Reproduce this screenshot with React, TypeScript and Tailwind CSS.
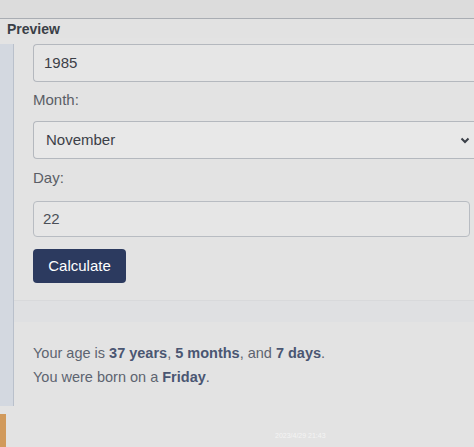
export default function App() {
  return (
    <div className="relative h-[447px] w-[474px] overflow-hidden bg-[#e3e3e3] font-['Liberation_Sans',Arial,sans-serif] text-[#4b4f57]">
      <div className="h-[18px] bg-[#dcdcdc]" />
      <div className="h-[20px] border-t border-[#a9adb3] bg-[#e2e2e2] px-[7px] pt-[1px] text-[14px] font-bold leading-[18px] text-[#3a3f47]">
        Preview
      </div>
      <div className="flex">
        <div className="flex w-[14px] flex-col">
          <div className="h-[6px]" />
          <div className="h-[362px] border-r border-[#b9c0cb] bg-[#d3d8e0]" />
          <div className="h-[8px]" />
          <div className="h-[40px] w-[6px] bg-[#d19a5c]" />
        </div>
        <div className="flex-1 pl-[19px] pt-[6px]">
          <div className="flex h-[38px] items-center rounded-l-[4px] border border-r-0 border-[#b4b8be] bg-[#e6e6e6] pl-[10px] text-[15px] text-[#3c4047]">
            1985
          </div>
          <div className="pt-[9px] text-[15px] leading-[18px] text-[#5a5e66]">Month:</div>
          <div className="mt-[12px] flex h-[38px] items-center justify-between rounded-l-[4px] border border-r-0 border-[#b4b8be] bg-[#e8e8e8] pl-[12px] pr-[4px] text-[15px] text-[#3c4047]">
            <span>November</span>
            <svg width="10" height="8" viewBox="0 0 10 8">
              <path d="M1.5 2.5 L5 6 L8.5 2.5" fill="none" stroke="#3a3f47" strokeWidth="2" />
            </svg>
          </div>
          <div className="pt-[10px] text-[15px] leading-[18px] text-[#5a5e66]">Day:</div>
          <div className="mr-[4px] mt-[14px] flex h-[36px] items-center rounded-[4px] border border-[#b8bcc2] bg-[#e6e6e6] pl-[9px] text-[15px] text-[#4b4f57]">
            22
          </div>
          <button className="mt-[12px] h-[34px] w-[93px] rounded-[4px] bg-[#2c3a5f] text-[15px] text-white">
            Calculate
          </button>
          <div className="-ml-[19px] mt-[17px] h-[22px] border-t border-[#d8d9db] bg-[#dfe0e2]" />
          <div className="mt-[19px] text-[14.5px] leading-[24px] text-[#5d6470]">
            <div>
              Your age is <b className="text-[#4a5672]">37 years</b>, <b className="text-[#4a5672]">5 months</b>, and{" "}
              <b className="text-[#4a5672]">7 days</b>.
            </div>
            <div>
              You were born on a <b className="text-[#4a5672]">Friday</b>.
            </div>
          </div>
        </div>
      </div>
      <div className="absolute left-[275px] top-[431px] text-[7px] text-[#f4f4f4]">2023/4/29 21:43</div>
    </div>
  );
}
